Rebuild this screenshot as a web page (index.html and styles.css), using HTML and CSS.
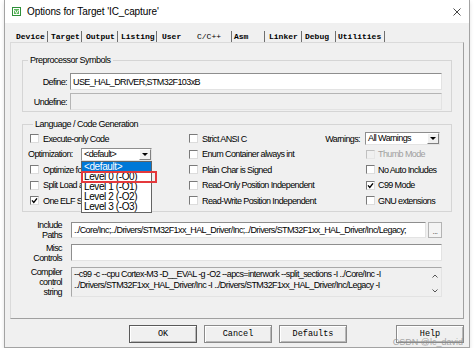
FILE: index.html
```html
<!DOCTYPE html>
<html lang="en">
<head>
  <meta charset="UTF-8">
  <title>Options for Target 'IC_capture'</title>
  <link rel="stylesheet" href="styles.css">
</head>
<body>
  <div class="window">
    <div class="titlebar">
      <svg class="app-icon" width="9" height="9" viewBox="0 0 9 9">
        <rect width="9" height="9" fill="#2f8f3a"/>
        <rect x="1.5" y="1.5" width="6" height="6" fill="#5cb85c" stroke="#fff" stroke-width="1"/>
        <path d="M2.6 3l1.9 3.4 1.9-3.4" fill="none" stroke="#fff" stroke-width="1"/>
      </svg>
      <span class="title">Options for Target 'IC_capture'</span>
      <svg class="close" width="8" height="8" viewBox="0 0 8 8">
        <path d="M0.5 0.5l7 7M7.5 0.5l-7 7" stroke="#333" stroke-width="0.9"/>
      </svg>
    </div>

    <div class="tabs">
      <span class="tab tab-device">Device</span>
      <span class="tab tab-target">Target</span>
      <span class="tab tab-output">Output</span>
      <span class="tab tab-listing">Listing</span>
      <span class="tab tab-user">User</span>
      <span class="tab tab-active">C/C++</span>
      <span class="tab tab-asm">Asm</span>
      <span class="tab tab-linker">Linker</span>
      <span class="tab tab-debug">Debug</span>
      <span class="tab tab-utilities">Utilities</span>
    </div>

    <div class="panel">
      <fieldset class="group group-pre">
        <legend>Preprocessor Symbols</legend>
        <div class="sym-grid">
          <span class="sym-label">Define:</span>
          <div class="edit">USE_HAL_DRIVER,STM32F103xB</div>
          <span class="sym-label">Undefine:</span>
          <div class="edit edit-disabled"></div>
        </div>
      </fieldset>

      <fieldset class="group group-lang">
        <legend>Language / Code Generation</legend>
        <div class="lang-grid">
          <!-- row 1 -->
          <div class="opt c1"><span class="check"></span>Execute-only Code</div>
          <div class="opt"><span class="check"></span>Strict ANSI C</div>
          <div class="opt c3-combo">Warnings:
            <div class="combo combo-warn"><span class="combo-text">All Warnings</span><span class="combo-btn"></span></div>
          </div>
          <!-- row 2 -->
          <div class="opt">
            <span class="opt-label">Optimization:</span>
            <div class="combo-wrap">
              <div class="combo"><span class="combo-text">&lt;default&gt;</span><span class="combo-btn"></span></div>
              <div class="droplist">
                <div class="sel">&lt;default&gt;</div>
                <div>Level 0 (-O0)</div>
                <div>Level 1 (-O1)</div>
                <div>Level 2 (-O2)</div>
                <div>Level 3 (-O3)</div>
                <span class="mark"></span>
              </div>
            </div>
          </div>
          <div class="opt"><span class="check"></span>Enum Container always int</div>
          <div class="opt c3 disabled"><span class="check"></span>Thumb Mode</div>
          <!-- row 3 -->
          <div class="opt c1"><span class="check"></span>Optimize for Time</div>
          <div class="opt"><span class="check"></span>Plain Char is Signed</div>
          <div class="opt c3"><span class="check"></span>No Auto Includes</div>
          <!-- row 4 -->
          <div class="opt c1"><span class="check"></span>Split Load and Store Multiple</div>
          <div class="opt"><span class="check"></span>Read-Only Position Independent</div>
          <div class="opt c3"><span class="check checked"><svg width="7" height="7" viewBox="0 0 7 7"><path d="M1 3.4l1.8 2 3.2-4" fill="none" stroke="#000" stroke-width="1.4"/></svg></span>C99 Mode</div>
          <!-- row 5 -->
          <div class="opt c1"><span class="check checked"><svg width="7" height="7" viewBox="0 0 7 7"><path d="M1 3.4l1.8 2 3.2-4" fill="none" stroke="#000" stroke-width="1.4"/></svg></span>One ELF Section per Function</div>
          <div class="opt"><span class="check"></span>Read-Write Position Independent</div>
          <div class="opt c3"><span class="check"></span>GNU extensions</div>
        </div>
      </fieldset>

      <div class="paths">
        <span class="paths-label">Include<br>Paths</span>
        <div class="path-field">
          <div class="edit">../Core/Inc;../Drivers/STM32F1xx_HAL_Driver/Inc;../Drivers/STM32F1xx_HAL_Driver/Inc/Legacy;</div>
          <span class="browse">...</span>
        </div>
        <span class="paths-label">Misc<br>Controls</span>
        <div class="edit"></div>
        <span class="paths-label">Compiler<br>control<br>string</span>
        <div class="cc">
          <div class="cc-text">--c99 -c --cpu Cortex-M3 -D__EVAL -g -O2 --apcs=interwork --split_sections -I ../Core/Inc -I<br>../Drivers/STM32F1xx_HAL_Driver/Inc -I ../Drivers/STM32F1xx_HAL_Driver/Inc/Legacy -I</div>
          <div class="cc-scroll">
            <svg width="6" height="4" viewBox="0 0 6 4"><path d="M0.5 3.5L3 1l2.5 2.5" fill="none" stroke="#555"/></svg>
            <svg width="6" height="4" viewBox="0 0 6 4"><path d="M0.5 0.5L3 3l2.5-2.5" fill="none" stroke="#555"/></svg>
          </div>
        </div>
      </div>
    </div>

    <div class="buttons">
      <span class="btn btn-default">OK</span>
      <span class="btn">Cancel</span>
      <span class="btn">Defaults</span>
      <span class="btn btn-help">Help</span>
    </div>

    <div class="watermark">CSDN @lc_david</div>
  </div>
</body>
</html>
```

FILE: styles.css
```css
body {
  margin: 0;
  background: #fff;
  font-family: "Liberation Sans", Arial, sans-serif;
  color: #000;
}
.window {
  position: relative;
  box-sizing: border-box;
  width: 466px;
  margin-left: 4px;
  background: #f0f0f0;
  border: 1px solid #a3a3a3;
  border-top: 0;
  box-shadow: 0 2px 4px rgba(0, 0, 0, 0.12);
}
.titlebar {
  display: flex;
  align-items: center;
  height: 23px;
  padding-left: 7px;
  background: #fff;
}
.app-icon {
  margin-right: 6px;
}
.title {
  font-size: 10px;
  letter-spacing: -0.1px;
}
.close {
  margin-left: auto;
  margin-right: 8px;
}

/* tab strip */
.tabs {
  display: flex;
  align-items: flex-end;
  height: 15px;
  margin-top: 4px;
  padding-left: 7px;
  font: bold 8px/11px "Liberation Mono", monospace;
}
.tab {
  box-sizing: border-box;
  height: 11px;
  padding-left: 3px;
  border-right: 1px solid #6f6f6f;
  white-space: nowrap;
}
.tab-device { width: 36px; padding-left: 4px; }
.tab-target { width: 34px; }
.tab-output { width: 36px; padding-left: 4px; }
.tab-listing { width: 39px; }
.tab-user { width: 30px; padding-left: 5px; border-right: 0; }
.tab-active { width: 45px; padding-left: 10px; font-weight: normal; }
.tab-asm { width: 33px; padding-left: 2px; }
.tab-linker { width: 37px; padding-left: 4px; }
.tab-debug { width: 34px; }
.tab-utilities { width: 49px; padding-left: 2px; }

.panel {
  margin: 0 5px;
  padding: 12px 0 21px;
  border: 1px solid;
  border-color: #dadada #a0a0a0 #a0a0a0 #dadada;
}

/* group boxes */
.group {
  margin: 0 11px;
  padding: 0;
  min-width: 0;
  border: 1px solid #d5d5d5;
}
.group legend {
  margin-left: 5px;
  padding: 0 2px;
  font-size: 9px;
  line-height: 10px;
  letter-spacing: -0.5px;
}
.group-pre {
  padding: 8px 9px 1px 0;
}
.group-lang {
  margin-top: 7px;
  padding: 2px 0 2.5px 5px;
}

.sym-grid {
  display: grid;
  grid-template-columns: 44px 1fr;
  grid-auto-rows: 17px;
  column-gap: 3px;
  row-gap: 3px;
  font-size: 9px;
  letter-spacing: -0.6px;
}
.sym-label {
  align-self: center;
  text-align: right;
}
.edit {
  box-sizing: border-box;
  display: flex;
  align-items: center;
  padding-left: 2px;
  background: #fff;
  border: 1px solid;
  border-color: #8e8e8e #e3e3e3 #e3e3e3 #8e8e8e;
  white-space: nowrap;
  overflow: hidden;
}
.edit-disabled {
  background: #f0f0f0;
  border-color: #b5b5b5 #e3e3e3 #e3e3e3 #b5b5b5;
}

/* language / code generation */
.lang-grid {
  display: grid;
  grid-template-columns: 161px 131px 120px;
  grid-auto-rows: 15.5px;
  font-size: 9px;
  letter-spacing: -0.6px;
}
.opt {
  display: flex;
  align-items: center;
  gap: 4px;
  white-space: nowrap;
}
.c1 { padding-left: 2px; }
.c3 { padding-left: 46px; gap: 3px; }
.c3-combo {
  justify-content: flex-end;
  gap: 5px;
}
.opt .opt-label {
  width: 49px;
}
.check {
  box-sizing: border-box;
  display: flex;
  align-items: center;
  justify-content: center;
  flex: none;
  width: 9px;
  height: 9px;
  background: #fff;
  border: 1px solid;
  border-color: #7a7a7a #dcdcdc #dcdcdc #7a7a7a;
}
.disabled {
  color: #a0a0a0;
}
.disabled .check {
  background: #f0f0f0;
  border-color: #c0c0c0 #e6e6e6 #e6e6e6 #c0c0c0;
}

.combo-wrap {
  position: relative;
}
.combo {
  box-sizing: border-box;
  display: flex;
  width: 71px;
  height: 13px;
  background: #fff;
  border: 1px solid;
  border-color: #8e8e8e #e3e3e3 #e3e3e3 #8e8e8e;
}
.combo-warn {
  width: 75px;
}
.combo-text {
  flex: 1;
  padding-left: 2px;
  line-height: 11px;
  white-space: nowrap;
  overflow: hidden;
}
.combo-btn {
  box-sizing: border-box;
  display: flex;
  align-items: center;
  justify-content: center;
  width: 12px;
  background: #f0f0f0;
  border: 1px solid;
  border-color: #fff #808080 #808080 #fff;
}
.combo-btn::after {
  content: "";
  border-left: 3px solid transparent;
  border-right: 3px solid transparent;
  border-top: 3px solid #000;
}
.droplist {
  position: absolute;
  top: 100%;
  left: 0;
  z-index: 2;
  box-sizing: border-box;
  width: 71px;
  background: #fff;
  border: 1px solid #646464;
  font-size: 10px;
  letter-spacing: -0.4px;
}
.droplist div {
  height: 10px;
  line-height: 10px;
  padding-left: 2px;
}
.droplist .sel {
  background: #0078d7;
  color: #fff;
}
.mark {
  position: absolute;
  left: -1px;
  top: 9px;
  box-sizing: border-box;
  width: 76px;
  height: 12px;
  border: 2px solid #e4393c;
}

/* paths */
.paths {
  display: grid;
  grid-template-columns: 51px 371px;
  grid-template-rows: 16px 17px 30px;
  column-gap: 9px;
  row-gap: 6px;
  margin-top: 10px;
  font-size: 9px;
  letter-spacing: -0.6px;
}
.paths-label {
  align-self: center;
  text-align: right;
  line-height: 10px;
}
.path-field {
  display: flex;
  gap: 2px;
}
.path-field .edit {
  flex: 1;
  min-width: 0;
}
.browse {
  box-sizing: border-box;
  display: flex;
  align-items: flex-end;
  justify-content: center;
  width: 14px;
  background: #f4f4f4;
  border: 1px solid #b4b4b4;
  font-size: 8px;
  line-height: 10px;
  color: #444;
}
.cc {
  display: flex;
  box-sizing: border-box;
  background: #f0f0f0;
  border: 1px solid;
  border-color: #a8a8a8 #e3e3e3 #e3e3e3 #a8a8a8;
}
.cc-text {
  flex: 1;
  padding: 1px 2px;
  line-height: 11px;
  white-space: nowrap;
  overflow: hidden;
}
.cc-scroll {
  display: flex;
  flex-direction: column;
  justify-content: space-between;
  align-items: center;
  width: 12px;
  padding: 6px 0 3px;
}

/* dialog buttons */
.buttons {
  display: flex;
  justify-content: flex-end;
  gap: 7px;
  padding: 6px 5px 4px 0;
}
.btn {
  box-sizing: border-box;
  display: flex;
  align-items: center;
  justify-content: center;
  width: 68px;
  height: 18px;
  background: #f0f0f0;
  border: 1px solid #8a8a8a;
  box-shadow: inset 1px 1px #fff, inset -1px -1px #b8b8b8;
  font: 8.5px "Liberation Mono", monospace;
}
.btn-default {
  border-color: #5a5a5a;
}
.btn-help {
  margin-left: 42px;
}
.watermark {
  position: absolute;
  right: 6px;
  bottom: 0;
  font-size: 9px;
  line-height: 10px;
  color: rgba(140, 140, 140, 0.75);
}
```
